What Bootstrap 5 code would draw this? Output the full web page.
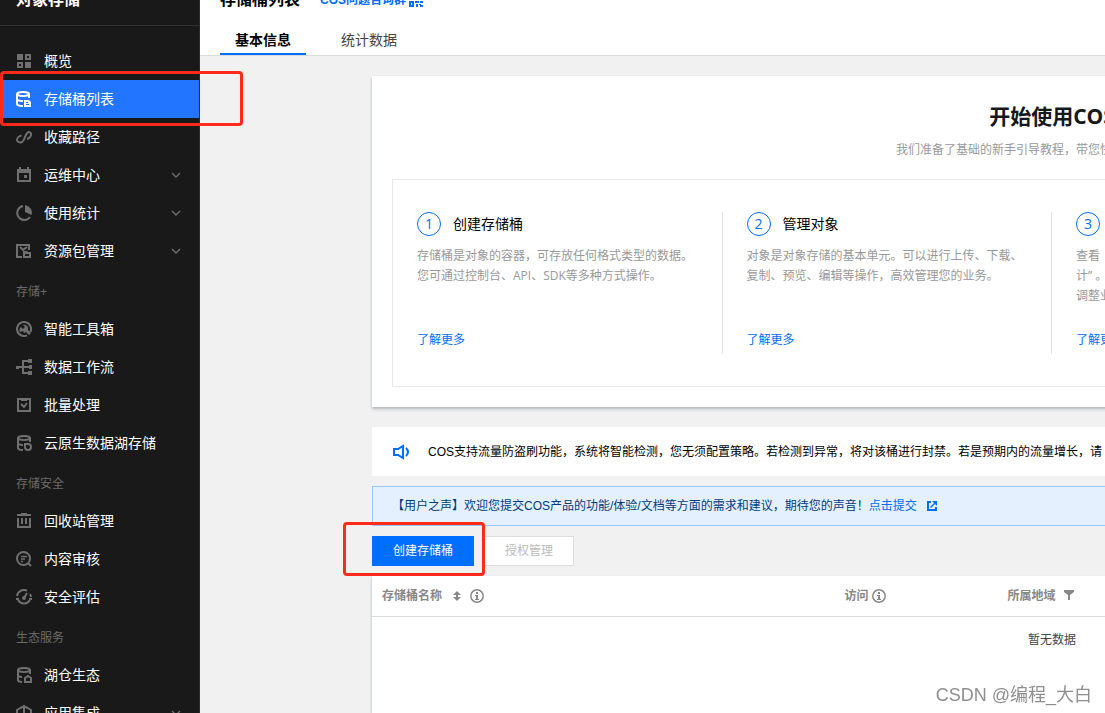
<!DOCTYPE html>
<html lang="zh-CN">
<head>
<meta charset="utf-8">
<meta name="viewport" content="width=device-width, initial-scale=1">
<title>对象存储 - 存储桶列表</title>
<link href="https://cdn.jsdelivr.net/npm/bootstrap@5.3.0/dist/css/bootstrap.min.css" rel="stylesheet">
<style>
:root{--cos-blue:#006eff;--cos-red:#ff2a1a}
body{font-family:"Liberation Sans","Noto Sans CJK SC",sans-serif;font-size:12px;line-height:20px;color:#000;background:#f1f1f1}
a{text-decoration:none;color:var(--cos-blue)}
svg{flex:none;display:block}
.shell{height:100vh}
/* sidebar */
.side{width:200px;background:#191919;border-right:1px solid #2b2b2b}
.side-head{height:26px;border-bottom:1px solid #303030}
.clip-line{height:8px}
.side-head h2,.page-title{font-size:16px;line-height:16px}
.page-group{font-size:12px;line-height:16px;gap:3px;margin-left:20px}
.side .nav-link{height:38px;padding:0 18px 0 16px;gap:12px;font-size:14px;color:#fff}
.side .nav-link svg{color:#707070}
.side .nav-link.active{background:#2175ff;border-left:2px solid #1d4fa5;padding-left:14px}
.side .nav-link.active svg{color:#fff}
.side-label{height:40px;padding:12px 16px 8px;color:#6c6c6c}
.marker{position:absolute;border:3px solid var(--cos-red);border-radius:4px;pointer-events:none;z-index:5}
.marker-nav{inset:-9px -44px -8px 0}
.marker-create{inset:-14px -11px -10px -29px}
/* page head */
.stage{min-width:1704px}
.page-head{background:#fff;border-bottom:1px solid #dcdcdc}
.page-head>*{padding-left:20px}
.page-tabs{gap:20px;margin-top:22px}
.page-tabs .nav-link{padding:0 15px 3px;font-size:14px;color:#444;border:0;border-bottom:2px solid transparent;border-radius:0}
.page-tabs .nav-link.active{color:#000;font-weight:700;border-color:var(--cos-blue)}
/* content */
.content{width:1360px;padding-top:20px}
.panel{background:#fff;box-shadow:0 2px 3px rgba(54,58,80,.32)}
.segoe{font-family:"Open Sans","Noto Sans CJK SC",sans-serif}
.guide{padding:28px 20px 20px}
.guide h1{font-size:21px;line-height:24px;color:#16181a}
.guide-sub{margin:12px 0 19px}
.muted{color:#999}
.steps{border:1px solid #e7e8eb;padding:32px 0}
.step{padding:0 24px;height:142px;border-right:1px solid #e5e5e5}
.step:last-child{border-right:0}
.step-head{gap:12px;margin-bottom:10px}
.step-no{width:24px;height:24px;border:1px solid var(--cos-blue);border-radius:50%;color:var(--cos-blue);font-size:14px}
.step h3{font-size:14px;line-height:24px}
.notice{height:49px;background:#fff;padding:0 20px;margin-top:20px;gap:18px}
.voice{height:40px;border:1px solid #97c7ff;background:#e5f0ff;color:#003b80;padding:0 19px;margin-top:10px}
.voice a{gap:10px}
.actions{gap:10px;padding:10px 0}
.btn{--bs-btn-font-size:12px;--bs-btn-line-height:20px;--bs-btn-padding-y:4px;--bs-btn-border-radius:0}
.btn-create{--bs-btn-padding-x:20px;--bs-btn-bg:#006eff;--bs-btn-border-color:#006eff;--bs-btn-color:#fff;min-width:102px}
.btn-auth{min-width:90px}
.btn-auth:disabled{background:#fff;border-color:#ddd;color:#bbb;opacity:1}
.buckets{table-layout:fixed}
.buckets th{height:40px;padding:0 10px;color:#888;border-bottom:1px solid #dcdcdc}
.buckets td{padding:13px 10px;color:#444;border:0}
.sort-mark{margin:0 9px 0 11px}
.c-name{width:34%}.c-visit{width:12%}
.watermark{position:fixed;right:13px;bottom:6px;font-size:18px;line-height:24px;color:#8f8f8f}
</style>
</head>
<body class="overflow-hidden">
<svg class="d-none" xmlns="http://www.w3.org/2000/svg">
  <symbol id="i-grid" viewBox="0 0 16 16"><path fill="currentColor" fill-rule="evenodd" d="M1 1h6v6H1zM9 1h6v6H9zM11 3v2h2V3zM1 9h6v6H1zM3 11v2h2v-2zM9 9h6v6H9z"/></symbol>
  <symbol id="i-bucket" viewBox="0 0 16 16"><g fill="none" stroke="currentColor" stroke-width="2"><ellipse cx="7" cy="3" rx="6" ry="2"/><path d="M1 3v10c0 1 2 2 6 2M13 3v4M1 8c0 1 2 2 6 2"/></g><path fill="currentColor" fill-rule="evenodd" d="M8 9h5l2 2v5H8zM10 11v1h2v-1zM10 13v1h3v-1z"/></symbol>
  <symbol id="i-path" viewBox="0 0 16 16"><path fill="none" stroke="currentColor" stroke-width="2" d="M5.500 6.500C3 7 1 9 1 11s3 3 5 2 2-3 3-5 2-5 4-5 3 3 1 5-2 2-3 2"/></symbol>
  <symbol id="i-cal" viewBox="0 0 16 16"><path fill="currentColor" fill-rule="evenodd" d="M1 2h2V0h2v2h6V0h2v2h2v13H1zM3 6v7h10V6zM8 8h3v3H8z"/></symbol>
  <symbol id="i-pie" viewBox="0 0 16 16"><path fill="none" stroke="currentColor" stroke-width="2" d="M7 1.100A7 7 0 1 0 14 12"/><path fill="currentColor" d="M9 0a8 8 0 0 1 6.600 10L9 7z"/></symbol>
  <symbol id="i-pack" viewBox="0 0 16 16"><path fill="none" stroke="currentColor" stroke-width="2" d="M6 14H1V2h12v5M4 4l3 3 4-3"/><path fill="currentColor" fill-rule="evenodd" d="M7 8h4l1 1h3v6H7zM9 11v2h4v-2z"/></symbol>
  <symbol id="i-tool" viewBox="0 0 16 16"><path fill="none" stroke="currentColor" stroke-width="2" d="M11 14.300A7 7 0 1 1 14.300 11"/><path fill="currentColor" d="M7 4a4 4 0 0 1 5 5l3 3-2 2-3-3-2 1-1-2-3 1a4 4 0 0 1 1-5l2 2 2-2z"/></symbol>
  <symbol id="i-flow" viewBox="0 0 16 16"><path fill="none" stroke="currentColor" stroke-width="2" d="M1 8h14M12 2H7v12h5"/><path fill="currentColor" d="M12 0h4v4h-4zM12 12h4v4h-4zM0 7h3v3H0zM13 6h3v4h-3z"/></symbol>
  <symbol id="i-batch" viewBox="0 0 16 16"><path fill="none" stroke="currentColor" stroke-width="2" d="M2 2h12v12H2zM5 7l3 3 3-4M5 3h6"/></symbol>
  <symbol id="i-lake" viewBox="0 0 16 16"><g fill="none" stroke="currentColor" stroke-width="2"><ellipse cx="8" cy="3" rx="6" ry="2"/><path d="M2 3v10c0 1 2 2 5 2M14 3v4M2 8c0 1 2 2 5 2"/><path d="M9 9h3a3 3 0 1 1-3 3z"/></g></symbol>
  <symbol id="i-trash" viewBox="0 0 16 16"><path fill="none" stroke="currentColor" stroke-width="2" d="M1 2h14M2 5v9h12V5M6 5v6M10 5v6M5 1h6"/></symbol>
  <symbol id="i-audit" viewBox="0 0 16 16"><g fill="none" stroke="currentColor" stroke-width="2"><circle cx="7.500" cy="7.500" r="6.500"/><path d="M12 12l3 3"/><path stroke-width="1.500" d="M5 5.500h6M5 8h4M5 10.500h2"/></g></symbol>
  <symbol id="i-gauge" viewBox="0 0 16 16"><g fill="none" stroke="currentColor" stroke-width="2"><path d="M1 7a7 7 0 0 1 10-5.300M14 5a7 7 0 0 1 1 3M2 11a7 7 0 0 0 12 0M0 10h3M13 10h3M8 9l3-5"/></g><circle cx="8" cy="9" r="2" fill="currentColor"/></symbol>
  <symbol id="i-eco" viewBox="0 0 16 16"><g fill="none" stroke="currentColor" stroke-width="2"><ellipse cx="8" cy="3" rx="6" ry="2"/><path d="M2 3v10c0 1 1 2 4 2M14 3v4M2 8c0 1 2 2 4 2M9 15v-4l3-2 3 2v4z"/></g></symbol>
  <symbol id="i-app" viewBox="0 0 16 16"><path fill="none" stroke="currentColor" stroke-width="2" d="M6 2L1 5v6l7 4 7-4V5l-5-3M8 0v10M5 3l3-2 3 2"/></symbol>
  <symbol id="i-down" viewBox="0 0 10 6"><path fill="none" stroke="currentColor" stroke-width="1.300" d="M1 1l4 4 4-4"/></symbol>
  <symbol id="i-info" viewBox="0 0 14 14"><circle cx="7" cy="7" r="6.200" fill="none" stroke="currentColor" stroke-width="1.500"/><path fill="currentColor" d="M6 3h2v2H6zM5 6h3v4h1v1H5v-1h1V7H5z"/></symbol>
</svg>

<div class="shell d-flex overflow-hidden">
  <aside class="side flex-shrink-0 position-relative z-1">
    <div class="side-head px-3"><div class="clip-line d-flex align-items-end"><h2 class="m-0 fw-bold text-white">对象存储</h2></div></div>
    <nav class="nav flex-column flex-nowrap pt-3">
      <a class="nav-link d-flex align-items-center" href="#"><svg width="16" height="16"><use href="#i-grid"/></svg>概览</a>
      <div class="position-relative">
        <a class="nav-link active d-flex align-items-center" href="#" aria-current="page"><svg width="16" height="16"><use href="#i-bucket"/></svg>存储桶列表</a>
        <span class="marker marker-nav"></span>
      </div>
      <a class="nav-link d-flex align-items-center" href="#"><svg width="16" height="16"><use href="#i-path"/></svg>收藏路径</a>
      <a class="nav-link d-flex align-items-center" href="#"><svg width="16" height="16"><use href="#i-cal"/></svg>运维中心<svg class="ms-auto" width="10" height="6"><use href="#i-down"/></svg></a>
      <a class="nav-link d-flex align-items-center" href="#"><svg width="16" height="16"><use href="#i-pie"/></svg>使用统计<svg class="ms-auto" width="10" height="6"><use href="#i-down"/></svg></a>
      <a class="nav-link d-flex align-items-center" href="#"><svg width="16" height="16"><use href="#i-pack"/></svg>资源包管理<svg class="ms-auto" width="10" height="6"><use href="#i-down"/></svg></a>
      <div class="side-label">存储+</div>
      <a class="nav-link d-flex align-items-center" href="#"><svg width="16" height="16"><use href="#i-tool"/></svg>智能工具箱</a>
      <a class="nav-link d-flex align-items-center" href="#"><svg width="16" height="16"><use href="#i-flow"/></svg>数据工作流</a>
      <a class="nav-link d-flex align-items-center" href="#"><svg width="16" height="16"><use href="#i-batch"/></svg>批量处理</a>
      <a class="nav-link d-flex align-items-center" href="#"><svg width="16" height="16"><use href="#i-lake"/></svg>云原生数据湖存储</a>
      <div class="side-label">存储安全</div>
      <a class="nav-link d-flex align-items-center" href="#"><svg width="16" height="16"><use href="#i-trash"/></svg>回收站管理</a>
      <a class="nav-link d-flex align-items-center" href="#"><svg width="16" height="16"><use href="#i-audit"/></svg>内容审核</a>
      <a class="nav-link d-flex align-items-center" href="#"><svg width="16" height="16"><use href="#i-gauge"/></svg>安全评估</a>
      <div class="side-label">生态服务</div>
      <a class="nav-link d-flex align-items-center" href="#"><svg width="16" height="16"><use href="#i-eco"/></svg>湖仓生态</a>
      <a class="nav-link d-flex align-items-center" href="#"><svg width="16" height="16"><use href="#i-app"/></svg>应用集成<svg class="ms-auto" width="10" height="6"><use href="#i-down"/></svg></a>
    </nav>
  </aside>

  <main class="stage flex-grow-1 d-flex flex-column">
    <header class="page-head">
      <div class="clip-line d-flex align-items-end">
        <div class="page-title fw-bold">存储桶列表</div>
        <a class="page-group fw-bold d-flex align-items-center" href="#">COS问题咨询群
          <svg width="14" height="14" viewBox="0 0 14 14"><path fill="currentColor" fill-rule="evenodd" d="M0 0h6v6H0zM2 2v2h2V2zM8 0h6v6H8zM10 2v2h2V2zM0 8h5v6H0zM2 10v2h1v-2zM6 8h4v2H6zM11 8h3v2h-3zM7 11h2v3H7zM10 11h2v1h-2zM11 12h3v2h-3z"/></svg></a>
      </div>
      <nav class="page-tabs nav">
        <a class="nav-link active" href="#" aria-current="page">基本信息</a>
        <a class="nav-link" href="#">统计数据</a>
      </nav>
    </header>

    <div class="content mx-auto flex-grow-1 d-flex flex-column">
      <section class="panel guide segoe">
        <h1 class="text-center fw-bold m-0">开始使用COS</h1>
        <p class="guide-sub text-center muted">我们准备了基础的新手引导教程，带您快速上手对象存储。</p>
        <div class="steps row g-0">
          <div class="step col-3 d-flex flex-column">
            <div class="step-head d-flex align-items-center"><span class="step-no d-flex align-items-center justify-content-center">1</span><h3 class="m-0 fw-normal">创建存储桶</h3></div>
            <p class="muted m-0">存储桶是对象的容器，可存放任何格式类型的数据。您可通过控制台、API、SDK等多种方式操作。</p>
            <a class="mt-auto mb-1" href="#">了解更多</a>
          </div>
          <div class="step col-3 d-flex flex-column">
            <div class="step-head d-flex align-items-center"><span class="step-no d-flex align-items-center justify-content-center">2</span><h3 class="m-0 fw-normal">管理对象</h3></div>
            <p class="muted m-0">对象是对象存储的基本单元。可以进行上传、下载、复制、预览、编辑等操作，高效管理您的业务。</p>
            <a class="mt-auto mb-1" href="#">了解更多</a>
          </div>
          <div class="step col-3 d-flex flex-column">
            <div class="step-head d-flex align-items-center"><span class="step-no d-flex align-items-center justify-content-center">3</span><h3 class="m-0 fw-normal">查看数据</h3></div>
            <p class="muted m-0">查看&ensp;“概览”、“使用统<br>计” 。<br>调整业务</p>
            <a class="mt-auto mb-1" href="#">了解更多</a>
          </div>
          <div class="step col-3"></div>
        </div>
      </section>

      <div class="notice d-flex align-items-center">
        <svg width="18" height="16" viewBox="0 0 18 16" fill="none" stroke="#006eff" stroke-width="2"><path d="M11 2v12L6 11H2V5h4zM14 4q4 4 0 8"/></svg>
        <span>COS支持流量防盗刷功能，系统将智能检测，您无须配置策略。若检测到异常，将对该桶进行封禁。若是预期内的流量增长，请</span>
      </div>

      <div class="voice d-flex align-items-center">
        <span>【用户之声】欢迎您提交COS产品的功能/体验/文档等方面的需求和建议，期待您的声音！</span>
        <a class="d-flex align-items-center" href="#">点击提交
          <svg width="10" height="10" viewBox="0 0 10 10"><path fill="currentColor" d="M0 0h4v2H2v6h6V6h2v4H0zM5 0h5v5L8 3 4 7 3 6l4-4z"/></svg></a>
      </div>

      <div class="actions d-flex">
        <div class="position-relative">
          <button class="btn btn-primary btn-create" type="button">创建存储桶</button>
          <span class="marker marker-create"></span>
        </div>
        <button class="btn btn-auth" type="button" disabled>授权管理</button>
      </div>

      <section class="panel flex-grow-1">
        <table class="buckets w-100">
          <colgroup><col class="c-name"><col class="c-visit"><col></colgroup>
          <thead><tr>
            <th scope="col"><div class="d-flex align-items-center"><span>存储桶名称</span>
              <svg class="sort-mark" width="8" height="10" viewBox="0 0 8 10"><path fill="currentColor" d="M4 0l4 4H5v2h3L4 10 0 6h3V4H0z"/></svg>
              <svg width="14" height="14"><use href="#i-info"/></svg></div></th>
            <th scope="col"><div class="d-flex align-items-center gap-1"><span>访问</span><svg width="14" height="14"><use href="#i-info"/></svg></div></th>
            <th scope="col"><div class="d-flex align-items-center gap-2"><span>所属地域</span><svg width="10" height="12" viewBox="0 0 10 12"><path fill="currentColor" d="M0 0h10v2L6 5v5H4V5L0 2z"/></svg></div></th>
          </tr></thead>
          <tbody><tr><td colspan="3" class="text-center">暂无数据</td></tr></tbody>
        </table>
      </section>
    </div>
  </main>
</div>
<div class="watermark">CSDN @编程_大白</div>
<script src="https://cdn.jsdelivr.net/npm/bootstrap@5.3.0/dist/js/bootstrap.bundle.min.js"></script>
</body>
</html>
